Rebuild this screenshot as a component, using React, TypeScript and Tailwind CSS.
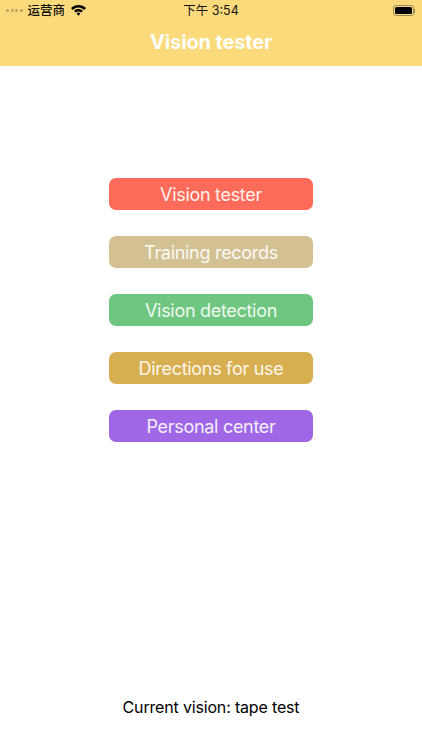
import React from 'react';

const menu = [
  { label: 'Vision tester', color: 'bg-[#ff6b5a]' },
  { label: 'Training records', color: 'bg-[#d3c193]' },
  { label: 'Vision detection', color: 'bg-[#6fc680]' },
  { label: 'Directions for use', color: 'bg-[#d8af50]' },
  { label: 'Personal center', color: 'bg-[#9f66e5]' },
];

const StatusBar: React.FC = () => (
  <div className="relative flex h-[21px] items-center justify-between pl-[6px] pr-[7px] text-[#111] font-['Inter','Noto_Sans_CJK_SC',sans-serif]">
    <div className="flex items-center">
      <div className="flex gap-[1.5px]">
        <span className="h-[3px] w-[3px] rounded-full bg-[#b3a26a]" />
        <span className="h-[3px] w-[3px] rounded-full bg-[#b3a26a]" />
        <span className="h-[3px] w-[3px] rounded-full bg-[#b3a26a]" />
        <span className="h-[3px] w-[3px] rounded-full bg-[#b3a26a]" />
      </div>
      <span className="ml-[5px] mt-[1px] text-[12.5px] font-medium leading-none">运营商</span>
      <svg className="ml-[6px]" width="15" height="11" viewBox="0 0 15 11">
        <path d="M7.5 0C4.6 0 2.1 1.1 0 3.1L1.8 5C3.4 3.5 5.3 2.6 7.5 2.6S11.6 3.5 13.2 5L15 3.1C12.9 1.1 10.4 0 7.5 0Z" fill="#000" />
        <path d="M7.5 3.9C5.8 3.9 4.3 4.5 3 5.7L4.7 7.5C5.5 6.8 6.4 6.4 7.5 6.4S9.5 6.8 10.3 7.5L12 5.7C10.7 4.5 9.2 3.9 7.5 3.9Z" fill="#000" />
        <path d="M7.5 7.6C6.8 7.6 6.2 7.8 5.6 8.4L7.5 10.8L9.4 8.4C8.8 7.8 8.2 7.6 7.5 7.6Z" fill="#000" />
      </svg>
    </div>
    <span className="absolute left-0 right-0 mt-[1px] text-center text-[12.5px] leading-none">下午 3:54</span>
    <div className="flex items-center">
      <div className="flex h-[11px] w-[21px] items-center rounded-[3px] border border-[#9a8b58] p-[1px]">
        <div className="h-full w-full rounded-[1.5px] bg-black" />
      </div>
      <div className="ml-[0.5px] h-[4px] w-[1px] bg-[#9a8b58]" />
    </div>
  </div>
);

const App: React.FC = () => {
  return (
    <div className="flex h-[750px] w-[422px] flex-col overflow-hidden bg-white font-['Inter',sans-serif]">
      <header className="h-[66px] bg-[#fbda7c]">
        <StatusBar />
        <div className="flex h-[42px] items-center justify-center text-[20px] font-bold tracking-[-0.15px] text-white">
          Vision tester
        </div>
      </header>

      <main className="flex flex-1 flex-col items-center gap-[25.5px] pt-[111.5px]">
        {menu.map((item) => (
          <button
            key={item.label}
            className={`flex h-[32.5px] w-[204px] items-center justify-center rounded-[7px] pt-[1px] text-[18px] tracking-[-0.3px] text-white/90 ${item.color}`}
          >
            {item.label}
          </button>
        ))}
      </main>

      <footer className="pb-[32px] text-center text-[16px] leading-[22px] tracking-[-0.17px] text-black">
        Current vision: tape test
      </footer>
    </div>
  );
};

export default App;
